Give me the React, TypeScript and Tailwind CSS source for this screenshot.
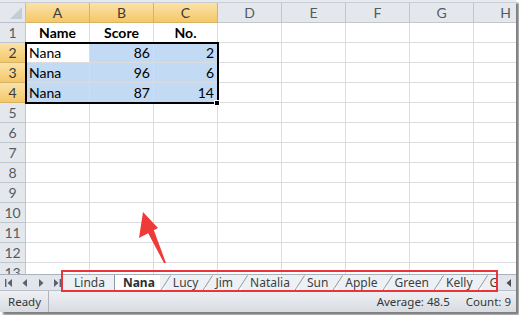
const cols = ['A', 'B', 'C', 'D', 'E', 'F', 'G', 'H']
const selCols = ['A', 'B', 'C']

const data: Record<number, string[]> = {
  1: ['Name', 'Score', 'No.'],
  2: ['Nana', '86', '2'],
  3: ['Nana', '96', '6'],
  4: ['Nana', '87', '14'],
}

const tabs = ['Lucy', 'Jim', 'Natalia', 'Sun', 'Apple', 'Green', 'Kelly', 'G']

function Slant() {
  return (
    <svg width="11" height="16" viewBox="0 0 11 16" className="shrink-0">
      <polygon points="0,16 4,10 5,16" fill="#ffffff" />
      <line x1="0.5" y1="16" x2="10.5" y2="0.5" stroke="#8e98a6" strokeWidth="1" />
    </svg>
  )
}

function Cell({ row, col }: { row: number; col: number }) {
  const values = data[row]
  const text = values ? values[col] : undefined
  const selected = row >= 2 && row <= 4 && col <= 2 && !(row === 2 && col === 0)
  const align = row === 1 ? 'justify-center font-bold' : col === 0 ? 'justify-start' : 'justify-end'
  return (
    <div
      className={`w-[64px] h-[20px] shrink-0 flex items-center px-[3px] border-r border-b border-[#dadcdf] text-[14px] text-black ${align} ${selected ? 'bg-[#c3daf5]' : 'bg-white'}`}
    >
      {text}
    </div>
  )
}

export default function App() {
  const rows = Array.from({ length: 13 }, (_, i) => i + 1)
  return (
    <div className="w-[519px] h-[315px] bg-white overflow-hidden">
      <div
        className="relative w-[516px] h-[312px] bg-white flex flex-col shadow-[3px_3px_2px_rgba(0,0,0,0.5)]"
        style={{ fontFamily: 'Lato, "Liberation Sans", sans-serif' }}
      >
        <div className="h-[3px] bg-[#e6e9ed] border-b border-[#c9ced5]" />

        {/* sheet grid */}
        <div className="relative h-[271px] overflow-hidden">
          <div className="flex h-[20px]">
            <div className="w-[26px] shrink-0 relative bg-[#e4e8ed] border-r border-b border-[#b9c0c9]">
              <svg width="12" height="12" className="absolute right-[3px] bottom-[3px]">
                <polygon points="12,0 12,12 0,12" fill="#c6ccd4" />
              </svg>
            </div>
            {cols.map((c) => (
              <div
                key={c}
                className={`w-[64px] shrink-0 flex items-center justify-center border-r border-b text-[14px] ${
                  selCols.includes(c)
                    ? 'bg-gradient-to-b from-[#fbe2a8] to-[#f4c866] border-[#d7b36a] text-[#3a3a3a]'
                    : 'bg-[#e4e8ed] border-[#c0c6ce] text-[#555b63]'
                }`}
              >
                {c}
              </div>
            ))}
          </div>
          {rows.map((r) => (
            <div key={r} className="flex h-[20px]">
              <div
                className={`w-[26px] shrink-0 flex items-center justify-center border-r border-b text-[14px] ${
                  r >= 2 && r <= 4
                    ? 'bg-gradient-to-b from-[#fbe2a8] to-[#f4c866] border-[#d7b36a] text-[#3a3a3a]'
                    : 'bg-[#e4e8ed] border-[#c0c6ce] text-[#555b63]'
                }`}
              >
                {r}
              </div>
              {cols.map((c, i) => (
                <Cell key={c} row={r} col={i} />
              ))}
            </div>
          ))}

          {/* selection outline */}
          <div className="absolute left-[25px] top-[39px] w-[194px] h-[62px] border-2 border-black" />
          <div className="absolute left-[214px] top-[97px] w-[6px] h-[6px] bg-black border border-white" />
        </div>

        {/* sheet tabs */}
        <div
          className="flex h-[16px] items-stretch bg-[#e2e6ec] border-t border-[#a9b1bc] text-[12px] text-[#3c3f44]"
          style={{ fontFamily: '"Noto Sans", "Open Sans", sans-serif' }}
        >
          <div className="w-[62px] shrink-0 flex items-center gap-[8px] pl-[5px] text-[#5a6270]">
            <svg width="8" height="8" viewBox="0 0 8 8">
              <rect x="0" y="0" width="1.4" height="8" fill="currentColor" />
              <polygon points="7,0 7,8 2.5,4" fill="currentColor" />
            </svg>
            <svg width="8" height="8" viewBox="0 0 8 8">
              <polygon points="6,0 6,8 1.5,4" fill="currentColor" />
            </svg>
            <svg width="8" height="8" viewBox="0 0 8 8">
              <polygon points="2,0 2,8 6.5,4" fill="currentColor" />
            </svg>
            <svg width="8" height="8" viewBox="0 0 8 8">
              <polygon points="1,0 1,8 5.5,4" fill="currentColor" />
              <rect x="6.6" y="0" width="1.4" height="8" fill="currentColor" />
            </svg>
          </div>
          <div className="flex-1 flex items-stretch overflow-hidden">
            <div className="flex items-center pl-[11px] pr-[9px] bg-[#eef1f4] border-l border-[#a9b1bc]">Linda</div>
            <div className="flex items-center pl-[8px] pr-[5px] bg-white border-l border-[#8e98a6] font-bold text-[#2c2f33]">
              Nana
            </div>
            {tabs.map((t) => (
              <div key={t} className="flex items-stretch bg-[#eef1f4] shrink-0">
                <Slant />
                <span className="flex items-center pl-[2px] pr-[4px] whitespace-nowrap">{t}</span>
              </div>
            ))}
          </div>
          <div className="w-[19px] shrink-0 flex items-center justify-end pr-[4px] border-l border-[#a9b1bc] text-[#4a4f57]">
            <svg width="6" height="8" viewBox="0 0 6 8">
              <polygon points="5,0 5,8 0.5,4" fill="currentColor" />
            </svg>
          </div>
        </div>

        {/* status bar */}
        <div
          className="flex h-[22px] items-center bg-gradient-to-b from-[#eef0f3] to-[#d8dce2] border-t border-[#b9c0c9] text-[11.5px] text-[#33363b]"
          style={{ fontFamily: '"Noto Sans", "Open Sans", sans-serif' }}
        >
          <div className="w-[49px] h-full flex items-center pl-[8px] border-r border-[#aeb4bd]">Ready</div>
          <div className="flex-1" />
          <span>Average: 48.5</span>
          <span className="ml-[16px] mr-[5px]">Count: 9</span>
        </div>

        {/* annotation */}
        <div className="absolute left-[61px] top-[270px] w-[437px] h-[22px] border-2 border-[#e8343a]" />
        <svg className="absolute left-0 top-0" width="516" height="312">
          <polygon points="143,212 139,238 158,228" fill="#ef3a3a" />
          <polygon points="147,231 153,228 166,263 164,263" fill="#ef3a3a" />
        </svg>
      </div>
    </div>
  )
}
